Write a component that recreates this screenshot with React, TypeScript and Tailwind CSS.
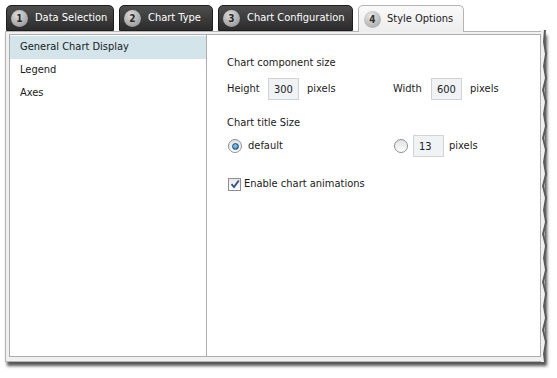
import type { ReactNode } from "react";

const font = { fontFamily: '"DejaVu Sans Condensed", "DejaVu Sans", sans-serif' };

function Badge({ n, light }: { n: number; light?: boolean }) {
  return (
    <span
      className={
        "flex h-[17px] w-[17px] shrink-0 items-center justify-center rounded-full text-[10px] font-bold " +
        (light
          ? "bg-[radial-gradient(circle_at_40%_30%,#e8e8e8,#9c9c9c)] text-[#333]"
          : "bg-[radial-gradient(circle_at_40%_30%,#dcdcdc,#8a8a8a)] text-[#2a2a2a]")
      }
    >
      {n}
    </span>
  );
}

function Tab({ n, label, width, active }: { n: number; label: string; width: number; active?: boolean }) {
  return (
    <div
      style={{ width }}
      className={
        active
          ? "relative z-10 -mb-px flex h-[27px] items-center gap-[6px] whitespace-nowrap rounded-t-[5px] border border-b-0 border-[#b4b4b4] bg-gradient-to-b from-[#fafafa] to-[#ededed] pl-[5px] text-[11px] text-[#1a1a1a]"
          : "flex h-[26px] items-center gap-[7px] whitespace-nowrap rounded-t-[5px] border border-[#1e1e1e] bg-gradient-to-b from-[#4e4e4e] to-[#2c2c2c] pl-[4px] text-[11px] text-white"
      }
    >
      <Badge n={n} light={active} />
      <span>{label}</span>
    </div>
  );
}

function Field({ value }: { value: string }) {
  return (
    <div className="flex h-[22px] w-[31px] shrink-0 items-center border border-[#d2d2d2] bg-[#eff3f6] pl-[5px] pt-[3px] text-[11px] text-[#222]">
      {value}
    </div>
  );
}

function Radio({ checked }: { checked?: boolean }) {
  return (
    <span className="flex h-[14px] w-[14px] shrink-0 items-center justify-center rounded-full border border-[#8f8f8f] bg-gradient-to-b from-[#e2e2e2] to-[#fdfdfd]">
      {checked && (
        <span className="h-[7px] w-[7px] rounded-full border border-[#1d4f74] bg-[radial-gradient(circle_at_40%_35%,#8fd0f6,#1b6aa8)]" />
      )}
    </span>
  );
}

function Row({ children, className }: { children: ReactNode; className?: string }) {
  return <div className={"flex items-center whitespace-nowrap " + (className ?? "")}>{children}</div>;
}

export default function App() {
  return (
    <div className="relative h-[378px] w-[557px] overflow-hidden bg-white text-[#1a1a1a]" style={font}>
      <div className="flex gap-[5px] pl-[6px] pt-[5px]">
        <Tab n={1} label="Data Selection" width={108} />
        <Tab n={2} label="Chart Type" width={94} />
        <Tab n={3} label="Chart Configuration" width={135} />
        <Tab n={4} label="Style Options" width={106} active />
      </div>

      <div className="ml-[5px] h-[331px] w-[540px] border border-[#b4b4b4] bg-[#f0f0f0] px-[3px] pb-[4px] pt-[2px] shadow-[2px_4px_3px_#555]">
        <div className="flex h-full border border-[#acacac] bg-white">
          <div className="w-[197px] border-r border-[#acacac] pt-px text-[11px]">
            <div className="flex h-[23px] items-center bg-[#d3e5eb] pl-[10px]">General Chart Display</div>
            <div className="flex h-[23px] items-center pl-[10px]">Legend</div>
            <div className="flex h-[23px] items-center pl-[10px]">Axes</div>
          </div>

          <div className="flex-1 pl-[20px] pt-[20px] text-[11px]">
            <div className="h-[15px]">Chart component size</div>
            <Row className="mt-[8px]">
              <span className="w-[41px]">Height</span>
              <Field value="300" />
              <span className="ml-[8px] w-[86px]">pixels</span>
              <span className="w-[38px]">Width</span>
              <Field value="600" />
              <span className="ml-[8px]">pixels</span>
            </Row>
            <div className="mt-[15px] h-[15px]">Chart title Size</div>
            <Row className="mt-[5px]">
              <span className="ml-px">
                <Radio checked />
              </span>
              <span className="ml-[6px] w-[146px]">default</span>
              <Radio />
              <span className="ml-[5px]">
                <Field value="13" />
              </span>
              <span className="ml-[5px]">pixels</span>
            </Row>
            <Row className="mt-[19px]">
              <span className="ml-px flex h-[13px] w-[13px] items-center justify-center border border-[#8f8f8f] bg-gradient-to-b from-[#e8e8e8] to-white">
                <svg width="10" height="10" viewBox="0 0 10 10">
                  <path d="M1.5 5.2 L4 8 L8.8 1.5" fill="none" stroke="#2f4f8f" strokeWidth="1.8" />
                </svg>
              </span>
              <span className="ml-[3px]">Enable chart animations</span>
            </Row>
          </div>
        </div>
      </div>

      <svg className="absolute left-[541px] top-[30px]" width="12" height="342" viewBox="0 0 12 342">
        <path
          d="M0 0 L5 0 L4 12 L6 24 L4 36 L6 48 L3 60 L6 72 L4 84 L6 96 L3 108 L6 120 L4 132 L6 144 L3 156 L6 168 L4 180 L6 192 L3 204 L6 216 L4 228 L6 240 L3 252 L6 264 L4 276 L6 288 L3 300 L6 312 L4 324 L5 332 L0 332 Z"
          fill="#5a5a5a"
        />
        <path
          d="M0 0 L3 0 L2 12 L4 24 L2 36 L4 48 L1 60 L4 72 L2 84 L4 96 L1 108 L4 120 L2 132 L4 144 L1 156 L4 168 L2 180 L4 192 L1 204 L4 216 L2 228 L4 240 L1 252 L4 264 L2 276 L4 288 L1 300 L4 312 L2 324 L3 332 L0 332 Z"
          fill="#f0f0f0"
        />
      </svg>
    </div>
  );
}
